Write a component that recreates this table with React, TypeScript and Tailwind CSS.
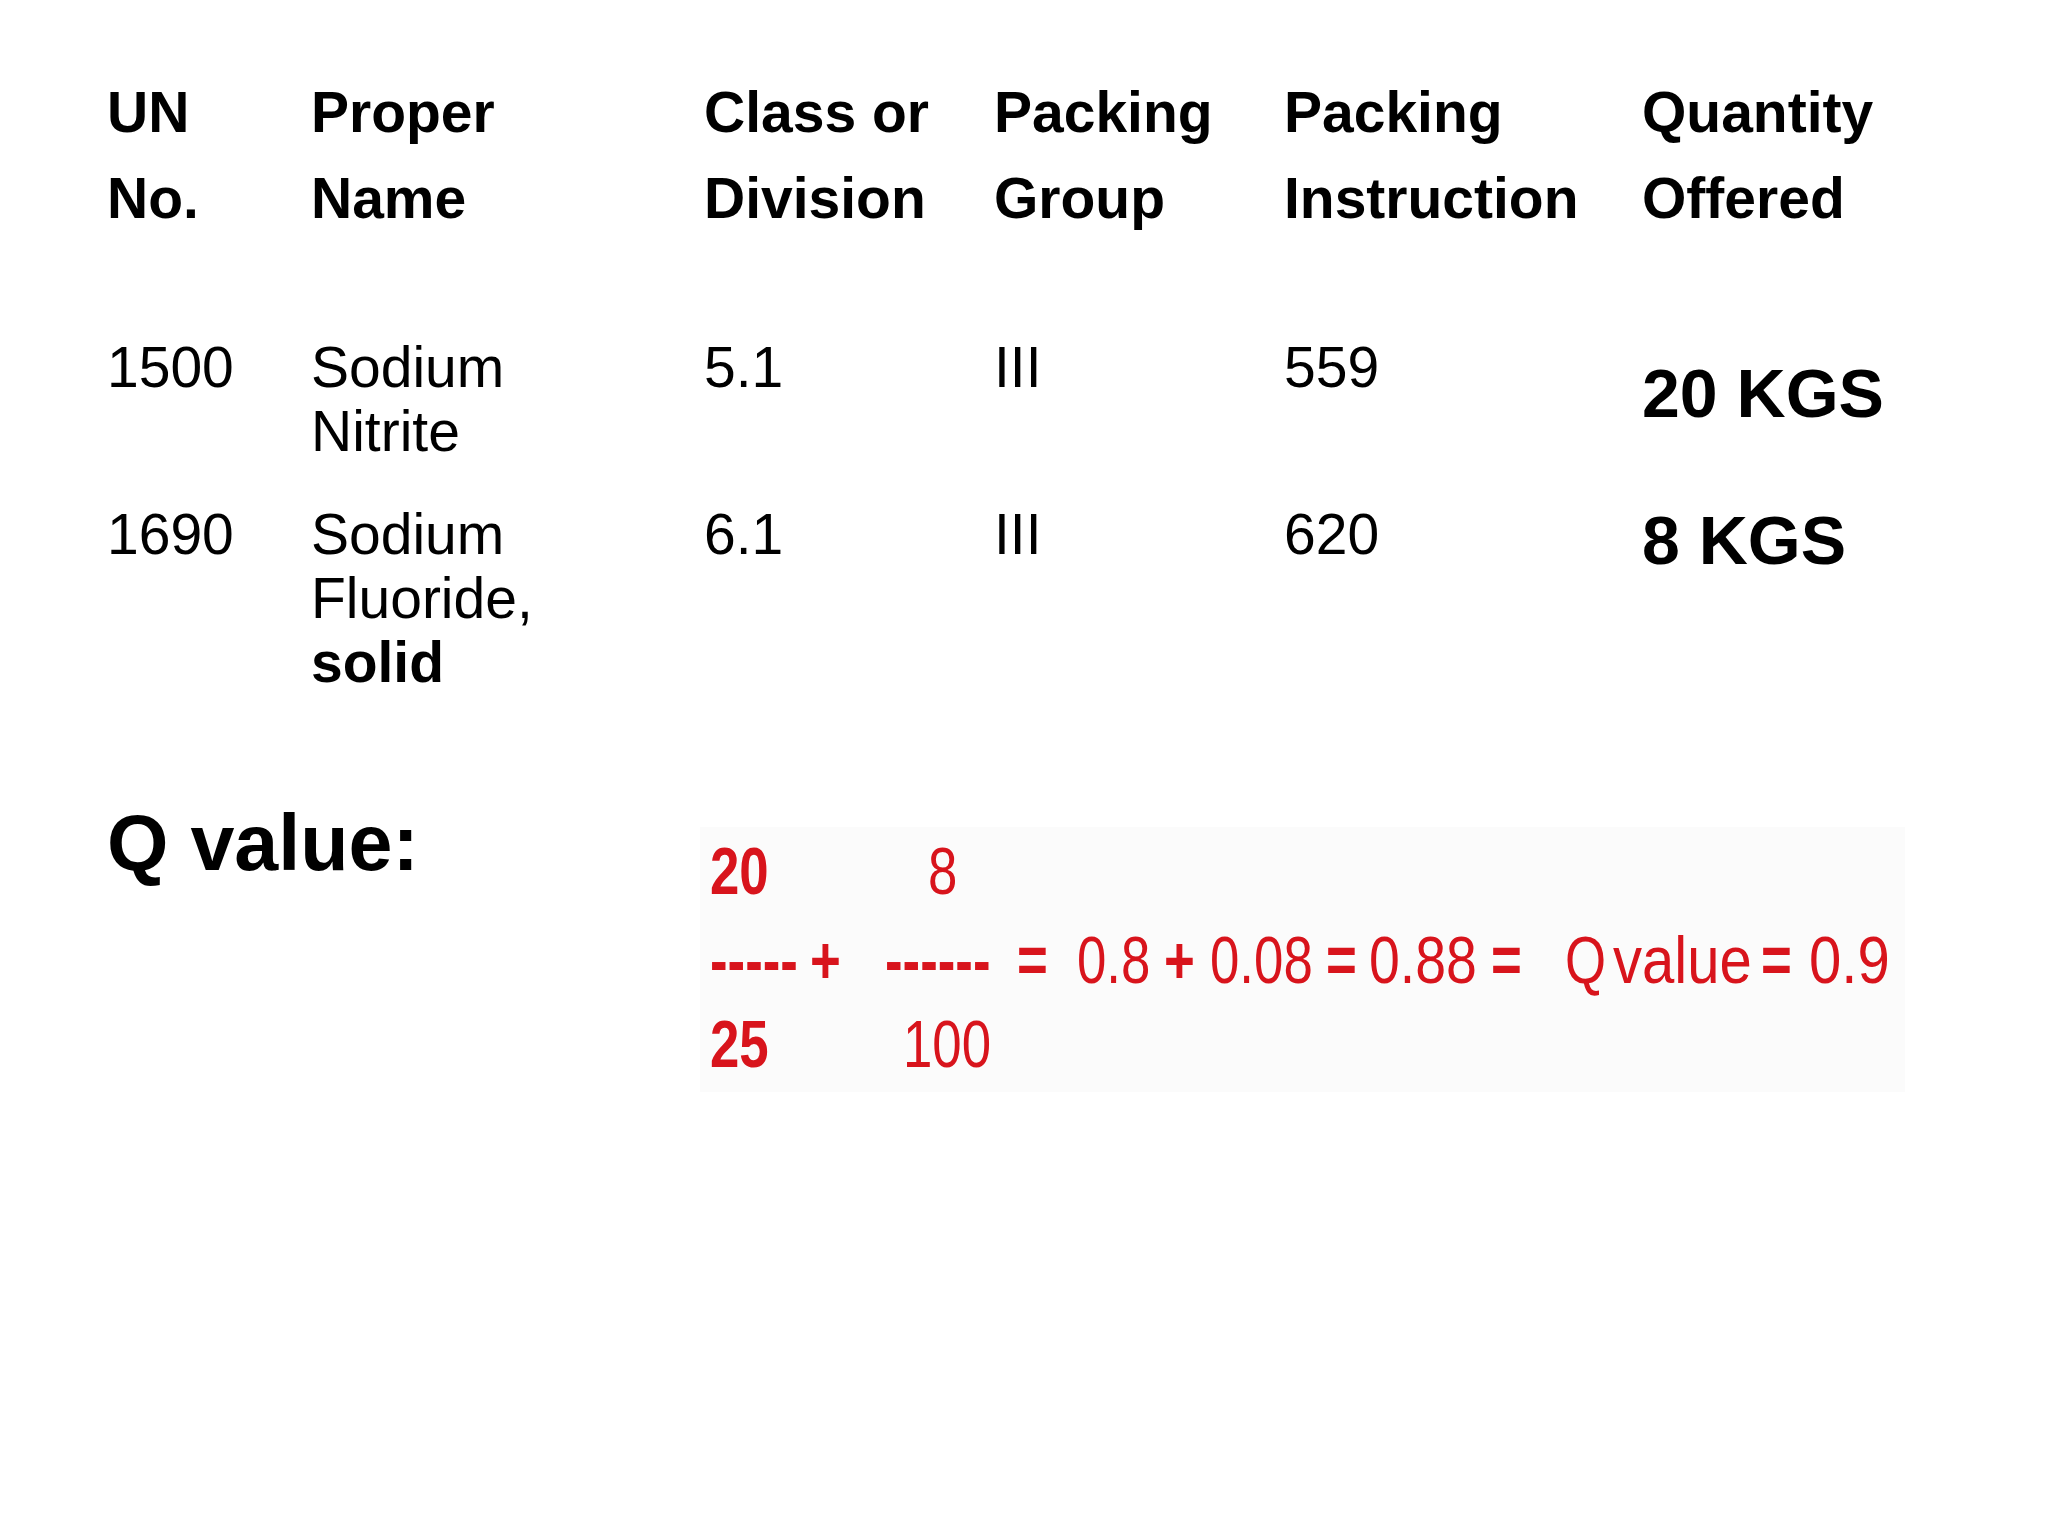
import React from "react"

const columns = "grid grid-cols-[204px_393px_290px_290px_358px_1fr]"

// one piece of the red formula: a fixed-width slot, text squeezed horizontally
function Tok({ w, children, bold, s }: { w: string; children: React.ReactNode; bold?: boolean; s?: "wide" | "mid" }) {
  const scale = s === "wide" ? "scale-x-[0.88]" : s === "mid" ? "scale-x-[0.84]" : "scale-x-[0.8]"
  return (
    <div className={`${w} shrink-0 whitespace-nowrap`}>
      <span className={`inline-block origin-left ${scale} ${bold ? "font-bold" : "font-normal"}`}>{children}</span>
    </div>
  )
}

export default function App() {
  return (
    <div className="min-h-screen w-full bg-white text-black font-['Liberation_Sans',Arial,sans-serif]">
      <div className="pt-[69px] pl-[107px]">
        {/* Header */}
        <div className={`${columns} text-[57px] leading-[86px] font-bold`}>
          <div>
            UN
            <br />
            No.
          </div>
          <div>
            Proper
            <br />
            Name
          </div>
          <div>
            Class or
            <br />
            Division
          </div>
          <div>
            Packing
            <br />
            Group
          </div>
          <div>
            Packing
            <br />
            Instruction
          </div>
          <div>
            Quantity
            <br />
            Offered
          </div>
        </div>

        {/* Row 1 */}
        <div className={`${columns} mt-[94px] text-[57px] leading-[64px]`}>
          <div>1500</div>
          <div>
            Sodium
            <br />
            Nitrite
          </div>
          <div>5.1</div>
          <div>III</div>
          <div>559</div>
          <div className="pt-[20px] text-[68px] leading-[76px] font-bold">20 KGS</div>
        </div>

        {/* Row 2 */}
        <div className={`${columns} mt-[39px] text-[57px] leading-[64px]`}>
          <div>1690</div>
          <div>
            Sodium
            <br />
            Fluoride,
            <br />
            <span className="font-bold">solid</span>
          </div>
          <div>6.1</div>
          <div>III</div>
          <div>620</div>
          <div className="text-[68px] leading-[76px] font-bold">8 KGS</div>
        </div>

        {/* Q value */}
        <div className="mt-[104px] flex">
          <div className="w-[593px] shrink-0 text-[79px] leading-[90px] font-bold">Q value:</div>

          <div className="mt-[29px] w-[1205px] bg-[#fbfbfb] pl-[10px] pb-[4px] text-[66px] leading-[88px] text-[#d8141c]">
            <div className="flex h-[89px]">
              <Tok w="w-[218px]" bold>
                20
              </Tok>
              <Tok w="w-[60px]">8</Tok>
            </div>
            <div className="flex h-[84px]">
              <Tok w="w-[100px]" bold>
                -----
              </Tok>
              <Tok w="w-[75px]" bold>
                +
              </Tok>
              <Tok w="w-[132px]" bold>
                ------
              </Tok>
              <Tok w="w-[60px]" bold>
                =
              </Tok>
              <Tok w="w-[87px]">0.8</Tok>
              <Tok w="w-[46px]" bold>
                +
              </Tok>
              <Tok w="w-[116px]">0.08</Tok>
              <Tok w="w-[43px]" bold>
                =
              </Tok>
              <Tok w="w-[122px]" s="mid">
                0.88
              </Tok>
              <Tok w="w-[74px]" bold>
                =
              </Tok>
              <Tok w="w-[48px]">Q</Tok>
              <Tok w="w-[148px]" s="wide">
                value
              </Tok>
              <Tok w="w-[48px]" bold>
                =
              </Tok>
              <Tok w="w-[90px]" s="wide">
                0.9
              </Tok>
            </div>
            <div className="flex h-[88px]">
              <Tok w="w-[193px]" bold>
                25
              </Tok>
              <Tok w="w-[100px]">100</Tok>
            </div>
          </div>
        </div>
      </div>
    </div>
  )
}
